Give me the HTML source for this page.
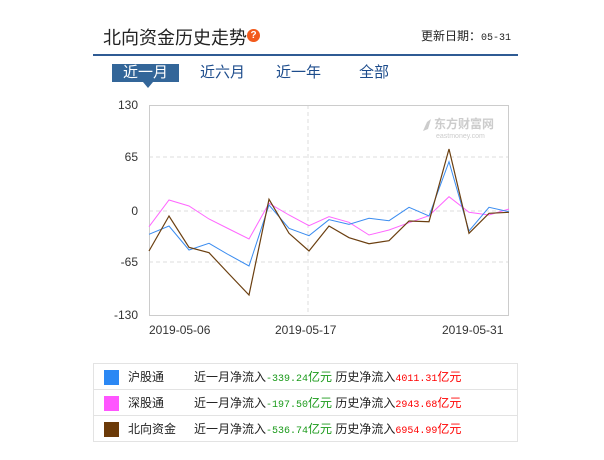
<!DOCTYPE html>
<html><head><meta charset="utf-8"><style>
body{margin:0;width:604px;height:460px;background:#fff;position:relative;font-family:"Liberation Sans","Noto Sans CJK SC",sans-serif;overflow:hidden}
.a{position:absolute;white-space:nowrap}
.m{font-family:"Liberation Mono",monospace;font-size:10px}
.title{left:103px;top:24px;font-size:18px;color:#222}
.q{left:247px;top:29px;width:13px;height:13px;border-radius:50%;background:#f25a1c;color:#fff;font-size:10px;font-weight:bold;text-align:center;line-height:13px}
.upd{left:421px;top:27px;font-size:12px;color:#222}
.line{left:93px;top:54px;width:425px;height:2px;background:#2f5b94}
.tab{top:64px;height:18px;line-height:18px;font-size:15px;color:#1d4c8c}
.act{left:112px;width:67px;background:#336699;color:#fff;text-align:center}
.tri{left:143px;top:82px;width:0;height:0;border-left:5px solid transparent;border-right:5px solid transparent;border-top:6px solid #336699}
.yl{font-size:12px;color:#333;width:40px;text-align:right;left:98px}
.xl{font-size:12px;color:#333;top:323px}
table{position:absolute;left:93px;top:363px;width:425px;border-collapse:collapse;font-size:12px;color:#222;border:1px solid #e3e3e3}
td{height:25px;border-top:1px solid #e3e3e3;border-bottom:1px solid #e3e3e3;padding:0}
.sq{display:inline-block;width:15px;height:15px;vertical-align:middle;margin-left:10px;margin-right:9px}
.g{color:#1a9a1a}.r{color:#f00}
</style></head><body>
<div class="a title">北向资金历史走势</div>
<div class="a q">?</div>
<div class="a upd">更新日期：<span class="m">05-31</span></div>
<div class="a line"></div>
<div class="a tab act">近一月</div>
<div class="a tri"></div>
<div class="a tab" style="left:200px">近六月</div>
<div class="a tab" style="left:276px">近一年</div>
<div class="a tab" style="left:359px">全部</div>
<div class="a yl" style="top:98px">130</div>
<div class="a yl" style="top:150px">65</div>
<div class="a yl" style="top:204px">0</div>
<div class="a yl" style="top:255px">-65</div>
<div class="a yl" style="top:308px">-130</div>
<div class="a xl" style="left:149px">2019-05-06</div>
<div class="a xl" style="left:275px">2019-05-17</div>
<div class="a xl" style="left:442px">2019-05-31</div>
<svg class="a" style="left:0;top:0" width="604" height="360">
<g stroke="#ddd" stroke-dasharray="4,3" fill="none">
<line x1="149" y1="157" x2="508" y2="157"/><line x1="149" y1="211" x2="508" y2="211"/><line x1="149" y1="262" x2="508" y2="262"/>
<line x1="308" y1="105" x2="308" y2="315"/></g>
<rect x="149.5" y="105.5" width="359" height="210" fill="none" stroke="#ccc"/>
<text x="434" y="128" font-size="12" font-weight="bold" fill="#ccc" font-family="Noto Sans CJK SC,sans-serif">东方财富网</text>
<text x="436" y="138" font-size="7" fill="#ccc" font-family="Liberation Sans,sans-serif">eastmoney.com</text>
<path d="M423 131 l4 -9 l4 -3 l-3 10 z" fill="#ccc"/>
<polyline fill="none" stroke="#ff66ff" points="149,226.7 169,200 189,206 209,219 229,229 249,239 269,203.3 289,215 309,225.7 329,216.7 349,222.3 369,235 389,230 409,222.7 429,215.7 449,196.7 469,212.3 489,215 509,209"/>
<polyline fill="none" stroke="#3a8cf0" points="149,234.3 169,226 189,250 209,243.3 229,255 249,266 269,205 289,228.3 309,235.7 329,219.7 349,224.3 369,218.3 389,220.7 409,207.3 429,216 449,161.7 469,231 489,207.3 509,211.7"/>
<polyline fill="none" stroke="#6b3f10" stroke-width="1.2" points="149,251 169,216 189,247.3 209,252.7 229,274 249,295 269,199.3 289,233.3 309,251 329,226 349,237.7 369,243.7 389,240.7 409,221 429,221.7 449,149 469,233.3 489,213.3 509,212.3"/>
</svg>
<table>
<tr><td style="width:100px"><span class="sq" style="background:#2b88f4"></span>沪股通</td><td>近一月净流入<span class="g"><span class="m">-339.24</span>亿元</span> 历史净流入<span class="r"><span class="m">4011.31</span>亿元</span></td></tr>
<tr><td><span class="sq" style="background:#ff55ff"></span>深股通</td><td>近一月净流入<span class="g"><span class="m">-197.50</span>亿元</span> 历史净流入<span class="r"><span class="m">2943.68</span>亿元</span></td></tr>
<tr><td><span class="sq" style="background:#6b3a08"></span>北向资金</td><td>近一月净流入<span class="g"><span class="m">-536.74</span>亿元</span> 历史净流入<span class="r"><span class="m">6954.99</span>亿元</span></td></tr>
</table>
</body></html>
